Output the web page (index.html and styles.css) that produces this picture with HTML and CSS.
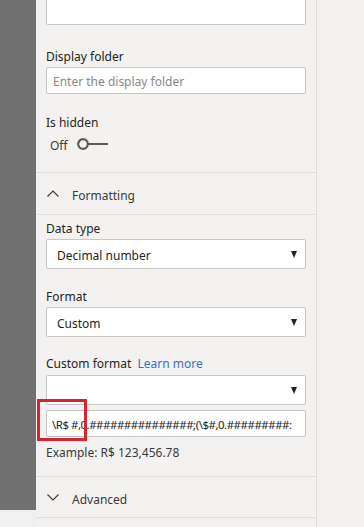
FILE: index.html
```html
<!DOCTYPE html>
<html lang="en">
  <head>
    <meta charset="UTF-8" />
    <meta name="viewport" content="width=device-width, initial-scale=1.0" />
    <title>Properties</title>
    <link rel="stylesheet" href="styles.css">
  </head>
  <body>
    <div class="layout">
      <div class="side-strip"></div>
      <div class="panel">
        <div class="desc-box"></div>

        <label class="label label-first">Display folder</label>
        <div class="text-input placeholder">Enter the display folder</div>

        <label class="label label-hidden">Is hidden</label>
        <div class="toggle-row">
          <span class="toggle-text">Off</span>
          <svg class="toggle" width="32" height="14" viewBox="0 0 32 14">
            <circle cx="6" cy="7" r="4.8" fill="none" stroke="#5c5b5a" stroke-width="2.2" />
            <line x1="11" y1="7" x2="31" y2="7" stroke="#5c5b5a" stroke-width="2" />
          </svg>
        </div>

        <div class="section-head section-first">
          <svg class="chevron" width="14" height="10" viewBox="0 0 14 10">
            <polyline points="1.5,7.5 7,2 12.5,7.5" fill="none" stroke="#3b3a39" stroke-width="1.1" />
          </svg>
          <span class="section-title">Formatting</span>
        </div>

        <label class="label label-section">Data type</label>
        <div class="dropdown">
          <span>Decimal number</span>
          <span class="caret"></span>
        </div>

        <label class="label label-next">Format</label>
        <div class="dropdown">
          <span>Custom</span>
          <span class="caret"></span>
        </div>

        <label class="label label-custom">Custom format <a class="link" href="#">Learn more</a></label>
        <div class="dropdown">
          <span></span>
          <span class="caret"></span>
        </div>
        <div class="format-wrap">
          <div class="text-input format-input">\R$ #,0.###############;(\$#,0.#########:</div>
          <div class="highlight"></div>
        </div>
        <div class="example">Example: R$ 123,456.78</div>

        <div class="section-head section-last">
          <svg class="chevron" width="14" height="10" viewBox="0 0 14 10">
            <polyline points="1.5,2.5 7,8 12.5,2.5" fill="none" stroke="#3b3a39" stroke-width="1.1" />
          </svg>
          <span class="section-title">Advanced</span>
        </div>
      </div>
      <div class="right-area"></div>
    </div>
  </body>
</html>
```

FILE: styles.css
```css
html,
body {
  margin: 0;
  height: 100%;
}
body {
  background-color: #f0f0f0;
  font-family: "Noto Sans", "Open Sans", sans-serif;
  font-size: 12px;
  color: #252423;
  overflow: hidden;
}

.layout {
  display: flex;
  height: 100%;
}
.side-strip {
  width: 36px;
  height: 510px;
  background-color: #707070;
  flex-shrink: 0;
}
.panel {
  width: 280px;
  flex-shrink: 0;
  background-color: #f3f2f1;
  border-right: 1px solid #e1dfdd;
  overflow: hidden;
}
.right-area {
  flex: 1;
  background-color: #f3f2f1;
}

.desc-box {
  margin: -10px 10px 0 10px;
  height: 33px;
  background-color: white;
  border: 1px solid #c8c6c4;
  border-radius: 2px;
}

.label {
  display: block;
  line-height: 16px;
  padding-top: 2px;
  margin: 0 10px 2px 10px;
}
.label-first {
  margin-top: 22px;
}
.label-hidden {
  margin-top: 19px;
}
.label-section {
  margin-top: 4px;
}
.label-next {
  margin-top: 18px;
}
.label-custom {
  margin-top: 17px;
  margin-bottom: 3px;
}
.link {
  color: #3a70c4;
  text-decoration: none;
  margin-left: 3px;
}

.text-input {
  margin: 0 10px;
  height: 25px;
  line-height: 27px;
  padding: 0 6px;
  background-color: white;
  border: 1px solid #c8c6c4;
  border-radius: 2px;
  white-space: nowrap;
  overflow: hidden;
}
.placeholder {
  color: #8a8886;
}

.toggle-row {
  display: flex;
  align-items: center;
  height: 20px;
  margin: 3px 0 18px 14px;
}
.toggle-text {
  color: #3b3a39;
  padding-top: 2px;
  margin-right: 9px;
}

.section-head {
  display: flex;
  align-items: center;
  height: 40px;
  border-top: 1px solid #e1dfdd;
  border-bottom: 1px solid #e1dfdd;
  padding-left: 10px;
  color: #3b3a39;
}
.section-first {
  height: 41px;
}
.section-last {
  margin-top: 15px;
}
.section-title {
  padding-top: 4px;
}
.chevron {
  margin-right: 12px;
}

.dropdown {
  display: flex;
  align-items: center;
  justify-content: space-between;
  margin: 0 10px;
  height: 25px;
  padding: 3px 8px 0 10px;
  background-color: white;
  border: 1px solid #c8c6c4;
  border-radius: 2px;
  color: #252423;
}
.caret {
  width: 0;
  height: 0;
  margin-bottom: 3px;
  border-left: 3.5px solid transparent;
  border-right: 3.5px solid transparent;
  border-top: 7px solid #252423;
}

.format-wrap {
  position: relative;
  margin-top: 5px;
}
.format-input {
  padding-left: 5px;
  color: #252423;
  font-size: 11.5px;
  letter-spacing: -0.5px;
}
.highlight {
  position: absolute;
  left: 1px;
  top: -11px;
  width: 44px;
  height: 36px;
  border: 3px solid #d9232e;
}

.example {
  margin: 6px 10px 0 10px;
  padding-top: 2px;
  line-height: 16px;
  color: #3b3a39;
}
```
